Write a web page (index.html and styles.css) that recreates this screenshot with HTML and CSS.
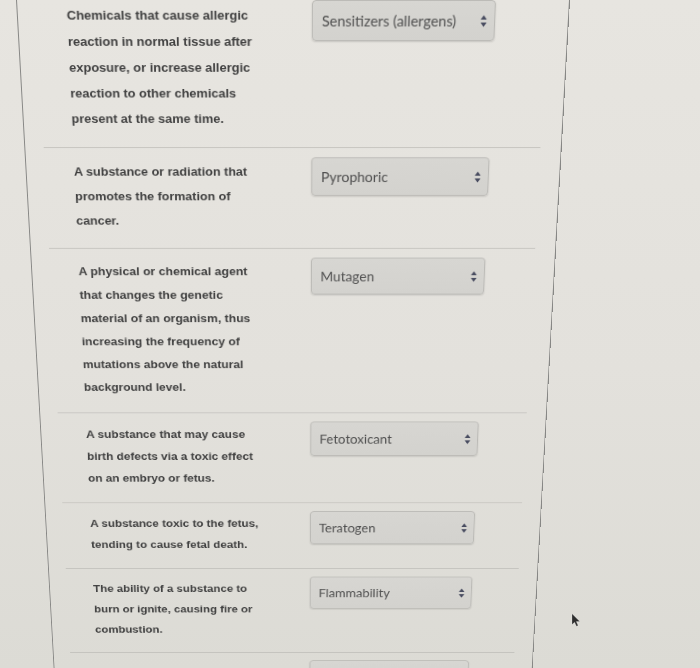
FILE: index.html
```html
<!DOCTYPE html>
<html lang="en">
<head>
<meta charset="utf-8">
<title>Matching</title>
<link rel="stylesheet" href="styles.css">
</head>
<body>
<div class="sheet">
  <div class="panel">
    <div class="q">
      <div class="q-text">Chemicals that cause allergic reaction in normal tissue after exposure, or increase allergic reaction to other chemicals present at the same time.</div>
      <div class="sel"><span>Sensitizers (allergens)</span><svg class="arr" viewBox="0 0 7 13" width="7" height="13"><path d="M3.5 0.5 L6.6 5 H0.4Z M3.5 12.5 L0.4 8 H6.6Z"/></svg></div>
    </div>
    <div class="q">
      <div class="q-text">A substance or radiation that promotes the formation of cancer.</div>
      <div class="sel"><span>Pyrophoric</span><svg class="arr" viewBox="0 0 7 13" width="7" height="13"><path d="M3.5 0.5 L6.6 5 H0.4Z M3.5 12.5 L0.4 8 H6.6Z"/></svg></div>
    </div>
    <div class="q">
      <div class="q-text">A physical or chemical agent that changes the genetic material of an organism, thus increasing the frequency of mutations above the natural background level.</div>
      <div class="sel"><span>Mutagen</span><svg class="arr" viewBox="0 0 7 13" width="7" height="13"><path d="M3.5 0.5 L6.6 5 H0.4Z M3.5 12.5 L0.4 8 H6.6Z"/></svg></div>
    </div>
    <div class="q">
      <div class="q-text">A substance that may cause birth defects via a toxic effect on an embryo or fetus.</div>
      <div class="sel"><span>Fetotoxicant</span><svg class="arr" viewBox="0 0 7 13" width="7" height="13"><path d="M3.5 0.5 L6.6 5 H0.4Z M3.5 12.5 L0.4 8 H6.6Z"/></svg></div>
    </div>
    <div class="q">
      <div class="q-text">A substance toxic to the fetus, tending to cause fetal death.</div>
      <div class="sel"><span>Teratogen</span><svg class="arr" viewBox="0 0 7 13" width="7" height="13"><path d="M3.5 0.5 L6.6 5 H0.4Z M3.5 12.5 L0.4 8 H6.6Z"/></svg></div>
    </div>
    <div class="q">
      <div class="q-text">The ability of a substance to burn or ignite, causing fire or combustion.</div>
      <div class="sel"><span>Flammability</span><svg class="arr" viewBox="0 0 7 13" width="7" height="13"><path d="M3.5 0.5 L6.6 5 H0.4Z M3.5 12.5 L0.4 8 H6.6Z"/></svg></div>
    </div>
    <div class="q">
      <div class="q-text">The ability of a substance to ignite spontaneously in air.</div>
      <div class="sel"><span>Carcinogen</span><svg class="arr" viewBox="0 0 7 13" width="7" height="13"><path d="M3.5 0.5 L6.6 5 H0.4Z M3.5 12.5 L0.4 8 H6.6Z"/></svg></div>
    </div>
  </div>
</div>
<svg class="cursor" viewBox="0 0 10 14" width="10" height="14"><path d="M1 0.8 L1 11.6 L3.6 9.2 L5.5 13.2 L7.1 12.5 L5.3 8.6 L8.8 8.5 Z"/></svg>
</body>
</html>
```
FILE: styles.css
```css
html, body {
  margin: 0;
  padding: 0;
  height: 668px;
  overflow: hidden;
}
body {
  position: relative;
  background: linear-gradient(180deg, #e7e5e0 0%, #e3e1dc 55%, #dcdbd5 100%);
  font-family: "Liberation Sans", Arial, sans-serif;
}
.sheet {
  width: 700px;
  margin-top: -11px;
  padding-left: 16px;
  box-sizing: border-box;
  transform-origin: 294px 11px;
  transform: perspective(870px) rotateX(-10deg);
}
.panel {
  width: 554px;
  box-sizing: border-box;
  border-left: 1px solid #878785;
  border-right: 1px solid #878785;
  padding: 0 21px 40px 19px;
}
.q {
  display: flex;
  align-items: flex-start;
  gap: 46px;
  border-top: 1px solid #c4c3be;
  padding: 10px 0 17px 30px;
}
.q-text {
  width: 200px;
  padding-top: 2px;
  font-size: 13px;
  font-weight: bold;
  line-height: 27px;
  color: #404040;
}
.sel {
  width: 184px;
  height: 42px;
  box-sizing: border-box;
  display: flex;
  align-items: center;
  justify-content: space-between;
  padding: 0 7px 0 9px;
  border: 1px solid #bcbbb7;
  border-radius: 4px;
  background: linear-gradient(180deg, #d7d6d2 0%, #d3d2ce 100%);
  box-shadow: 0 1px 2px rgba(0, 0, 0, 0.14);
  font-family: Lato, "Liberation Sans", sans-serif;
  font-size: 14.5px;
  color: #505050;
}
.arr {
  fill: #484c60;
}
.cursor {
  position: absolute;
  left: 571px;
  top: 613px;
  fill: #2e2e2e;
  stroke: rgba(255, 255, 255, 0.35);
  stroke-width: 0.6;
}
```
